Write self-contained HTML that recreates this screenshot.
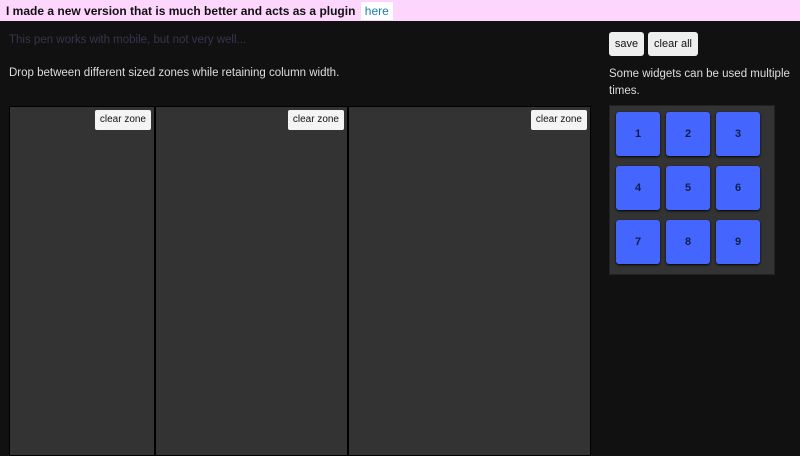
<!DOCTYPE html>
<html><head><style>
*{box-sizing:border-box;margin:0;padding:0}
body{width:800px;height:450px;overflow:hidden;background:#111;font-family:"Liberation Sans",sans-serif;position:relative;color:#ddd}
.top{position:absolute;left:0;top:0;width:800px;height:21px;background:#fdd6fd;font-size:12px;font-weight:bold;color:#111;padding:4px 6px;white-space:nowrap}
.top span{background:#fff;color:#1a7fb0;font-weight:normal;padding:2px 4px;margin-left:2px}
.t{position:absolute;font-size:11.5px;white-space:nowrap}
.zone{position:absolute;top:106px;height:350px;background:#333;border:1px solid #000}
.cz{position:absolute;top:3px;right:3px;background:#f4f4f4;color:#111;font-size:10px;padding:4px 5px;border-radius:2px;height:20px;white-space:nowrap}
.btn{position:absolute;top:32px;height:24px;background:#eee;color:#111;font-size:11px;padding:6px 0;text-align:center;border-radius:3px;white-space:nowrap}
.panel{position:absolute;left:609px;top:105px;width:166px;height:170px;background:#333;border:1px solid #222}
.tile{position:absolute;width:44px;height:44px;background:#4466ff;border-radius:3px;color:#10204a;font-weight:bold;font-size:11px;display:flex;align-items:center;justify-content:center;box-shadow:0 1px 2px #000}
</style></head><body>
<div class="top">I made a new version that is much better and acts as a plugin <span>here</span></div>
<div class="t" style="left:9px;top:34px;color:#3a3350">This pen works with mobile, but not very well...</div>
<div class="t" style="left:9px;top:67px">Drop between different sized zones while retaining column width.</div>
<div class="zone" style="left:9px;width:146px"><div class="cz">clear zone</div></div>
<div class="zone" style="left:155px;width:193px"><div class="cz">clear zone</div></div>
<div class="zone" style="left:348px;width:243px"><div class="cz">clear zone</div></div>
<div class="btn" style="left:609px;width:35px">save</div>
<div class="btn" style="left:648px;width:50px">clear all</div>
<div class="t" style="left:609px;top:66px;line-height:17px">Some widgets can be used multiple<br>times.</div>
<div class="panel"></div>
<div class="tile" style="left:616px;top:112px">1</div>
<div class="tile" style="left:666px;top:112px">2</div>
<div class="tile" style="left:716px;top:112px">3</div>
<div class="tile" style="left:616px;top:166px">4</div>
<div class="tile" style="left:666px;top:166px">5</div>
<div class="tile" style="left:716px;top:166px">6</div>
<div class="tile" style="left:616px;top:220px">7</div>
<div class="tile" style="left:666px;top:220px">8</div>
<div class="tile" style="left:716px;top:220px">9</div>
</body></html>
